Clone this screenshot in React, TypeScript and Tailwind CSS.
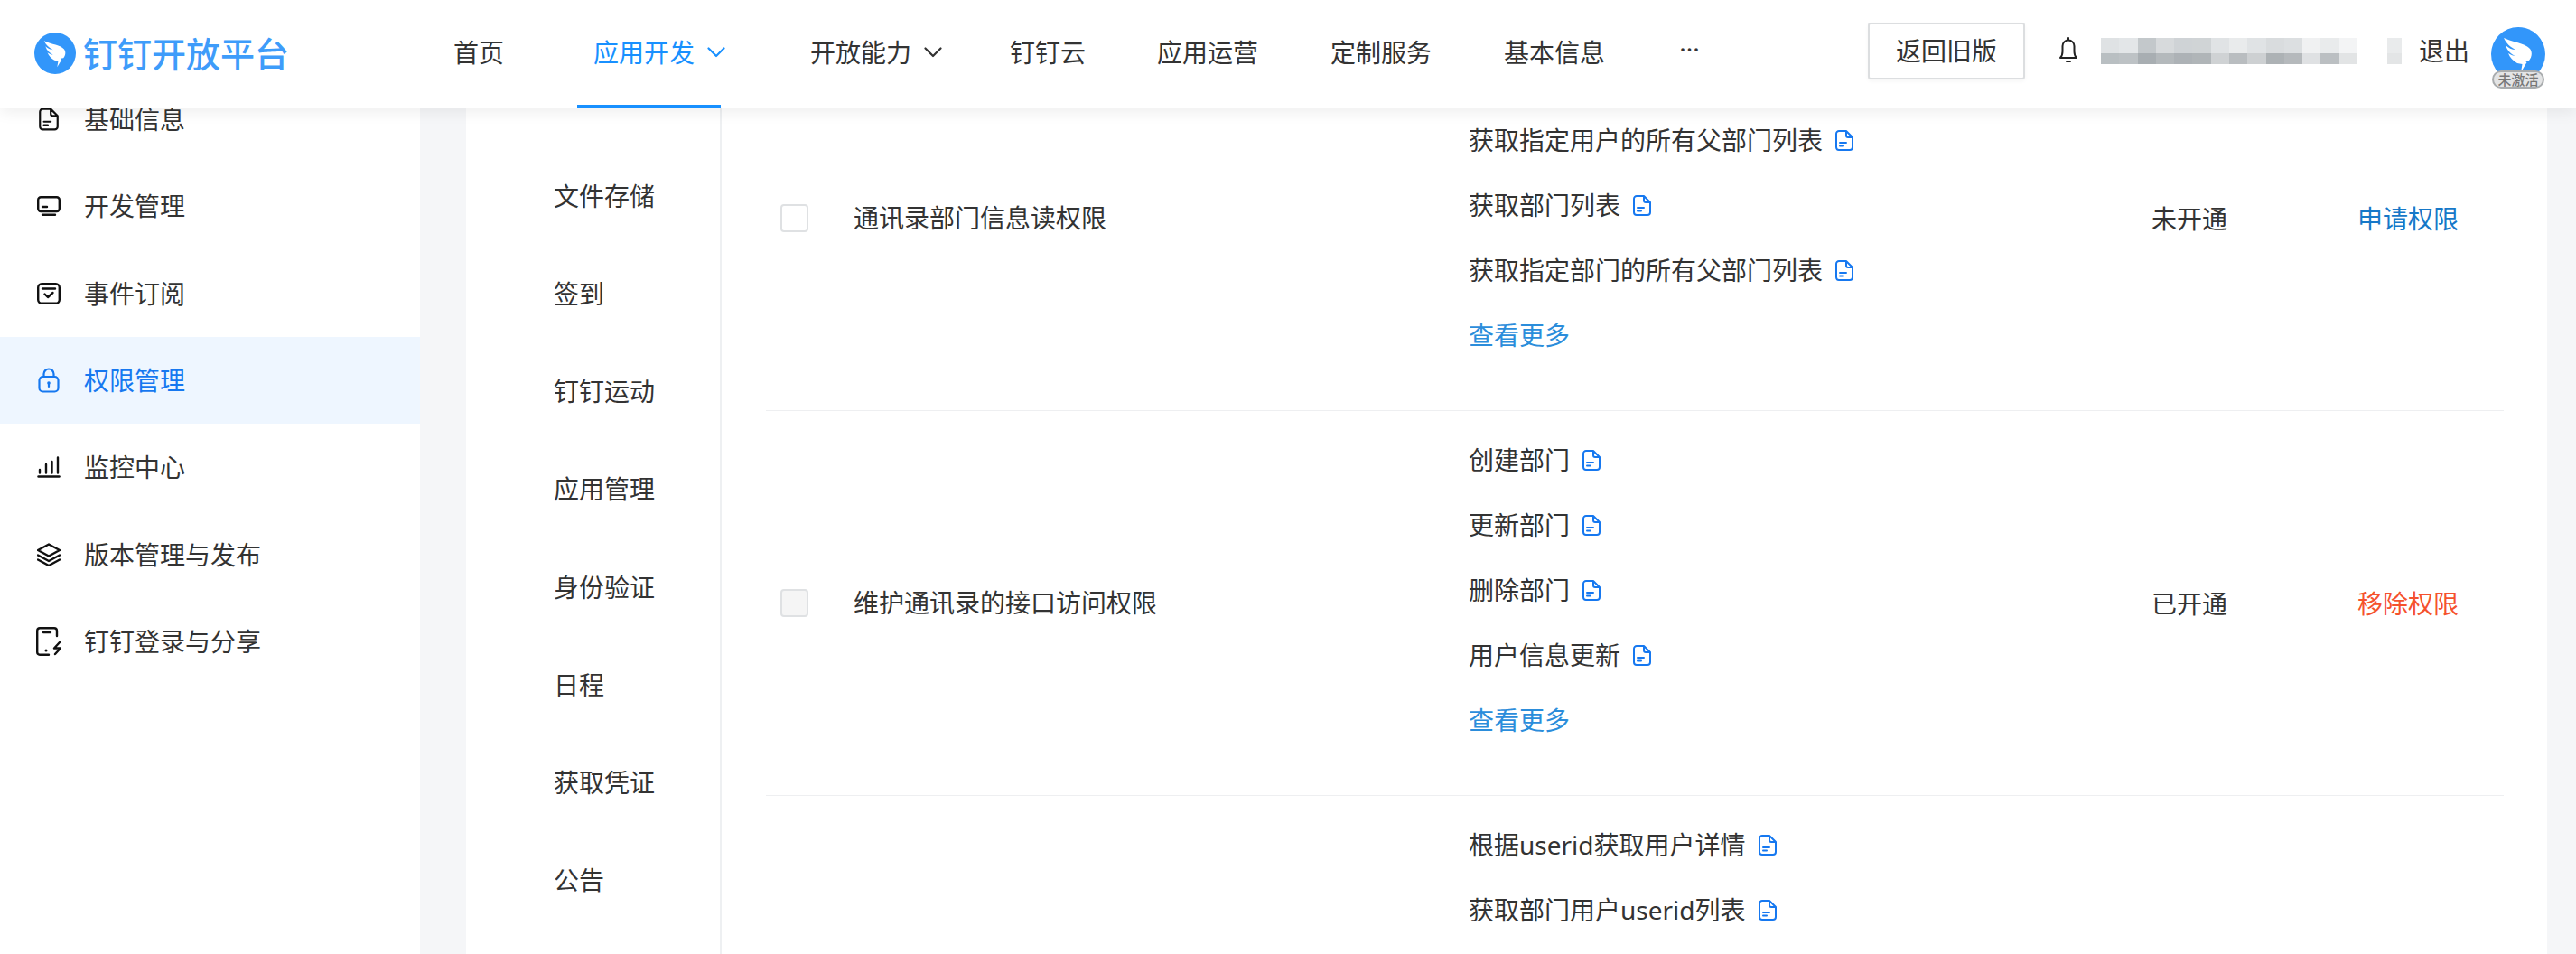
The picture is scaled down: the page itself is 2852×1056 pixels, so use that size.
import type { ReactNode } from "react";

const FONT = "font-['Noto_Sans','Noto_Sans_CJK_SC',sans-serif]";

function LogoMark({ className }: { className: string }) {
  return (
    <svg viewBox="0 0 60 60" className={className}>
      <circle cx="30" cy="30" r="30" fill="#3296fa" />
      <path
        fill="#fff"
        d="M14 12C25 17 38 18 43 24C46 28 45 33 42 37L37.5 37.5L39.5 39L33 50L34.5 41L29 40C24 37 21 34 19 29C22 31 25 32 27 32C22 30 18 26 16 20C19 23 23 25 27 25C21 22 17 18 14 12Z"
      />
    </svg>
  );
}

function Chevron({ className }: { className: string }) {
  return (
    <svg viewBox="0 0 20 12" fill="none" stroke="currentColor" strokeWidth="2.2" strokeLinecap="round" strokeLinejoin="round" className={className}>
      <path d="M1.5 1.5L10 10L18.5 1.5" />
    </svg>
  );
}

function DocIcon({ className }: { className: string }) {
  return (
    <svg viewBox="0 0 20 24" fill="none" stroke="currentColor" strokeWidth="2" strokeLinejoin="round" strokeLinecap="round" className={className}>
      <path d="M12 1.5H4A3 3 0 0 0 1 4.5V19.5A3 3 0 0 0 4 22.5H16A3 3 0 0 0 19 19.5V8.5H14A2 2 0 0 1 12 6.5V1.5L19 8.5" />
      <path d="M5 14.5H12M5 18H9" />
    </svg>
  );
}

function MonitorIcon() {
  return (
    <svg viewBox="0 0 26 22" fill="none" stroke="currentColor" strokeWidth="2.4" strokeLinecap="round" strokeLinejoin="round" className="w-[26px] h-[22px]">
      <rect x="1.2" y="1.2" width="23.6" height="15.8" rx="3" />
      <path d="M6 20.8H20M6 12H11" />
    </svg>
  );
}

function EventIcon() {
  return (
    <svg viewBox="0 0 26 24" fill="none" stroke="currentColor" strokeWidth="2.4" strokeLinecap="round" strokeLinejoin="round" className="w-[26px] h-[24px]">
      <rect x="1.2" y="1.2" width="23.6" height="21.6" rx="4" />
      <path d="M6 6.5H20M8.5 12.5L12 16L17.5 11" />
    </svg>
  );
}

function LockIcon() {
  return (
    <svg viewBox="0 0 24 28" fill="none" stroke="currentColor" strokeWidth="2.2" strokeLinecap="round" className="w-[24px] h-[28px]">
      <rect x="1.5" y="10" width="21" height="16.5" rx="4" />
      <path d="M6.5 10V7A5.5 5.5 0 0 1 17.5 7V10" />
      <path d="M12 17V21" />
      <circle cx="12" cy="17" r="1.8" fill="currentColor" stroke="none" />
    </svg>
  );
}

function BarsIcon() {
  return (
    <svg viewBox="0 0 26 24" fill="none" stroke="currentColor" strokeLinecap="round" className="w-[26px] h-[24px]">
      <path strokeWidth="2.5" d="M1.5 22.5H24.5" />
      <path strokeWidth="2.4" d="M3 18.5V15M10 18.5V9M16.5 18.5V6M23 18.5V1.5" />
    </svg>
  );
}

function LayersIcon() {
  return (
    <svg viewBox="0 0 26 26" fill="none" stroke="currentColor" strokeWidth="2.4" strokeLinejoin="round" strokeLinecap="round" className="w-[26px] h-[26px]">
      <path d="M13 1.5L25 8L13 14.5L1 8Z" />
      <path d="M1 13.5L13 20L25 13.5" />
      <path d="M1 18.5L13 25L25 18.5" />
    </svg>
  );
}

function PhoneBoltIcon() {
  return (
    <svg viewBox="0 0 28 32" fill="none" stroke="currentColor" strokeWidth="2.4" strokeLinecap="round" strokeLinejoin="round" className="w-[28px] h-[32px]">
      <path d="M23 10V4A3 3 0 0 0 20 1.2H4A3 3 0 0 0 1.2 4V28A3 3 0 0 0 4 30.8H14" />
      <path d="M8 6H16" />
      <circle cx="11" cy="26" r="1.5" fill="currentColor" stroke="none" />
      <path d="M26 17L20 23.5H27L21 30" />
    </svg>
  );
}

function NavText({ children, className = "text-[#333]" }: { children: ReactNode; className?: string }) {
  return <span className={`text-[28px] leading-[40px] whitespace-nowrap ${className}`}>{children}</span>;
}

function Header() {
  return (
    <header className="relative z-10 h-[120px] bg-white flex items-center shadow-[0_4px_16px_rgba(0,0,0,0.07)] shrink-0">
      <LogoMark className="ml-[38px] w-[46px] h-[46px] -mt-[3px] shrink-0" />
      <span className="ml-[8px] text-[38px] leading-[46px] font-medium text-[#3e9cfa] -mt-[3px] whitespace-nowrap">钉钉开放平台</span>
      <nav className="flex items-center ml-[182px] -mt-[4px]">
        <NavText>首页</NavText>
        <div className="relative ml-[99px] flex items-center">
          <NavText className="text-[#1890ff]">应用开发</NavText>
          <Chevron className="ml-[14px] w-[20px] h-[12px] text-[#1890ff]" />
          <div className="absolute left-[-18px] top-[78px] w-[159px] h-[4px] bg-[#1890ff]" />
        </div>
        <NavText className="text-[#333] ml-[94px]">开放能力</NavText>
        <Chevron className="ml-[14px] w-[20px] h-[12px] text-[#333]" />
        <span className="ml-[75px]"><NavText>钉钉云</NavText></span>
        <span className="ml-[79px]"><NavText>应用运营</NavText></span>
        <span className="ml-[80px]"><NavText>定制服务</NavText></span>
        <span className="ml-[80px]"><NavText>基本信息</NavText></span>
        <span className="ml-[82px] text-[28px] leading-[24px] text-[#333] -mt-[8px]">···</span>
      </nav>
      <div className="ml-auto flex items-center -mt-[8px]">
        <button className="w-[174px] h-[63px] border-2 border-[#dcdee0] rounded-[3px] text-[28px] text-[#333] bg-white shadow-[0_2px_4px_rgba(0,0,0,0.04)]">
          返回旧版
        </button>
        <svg viewBox="0 0 24 30" fill="none" stroke="#222" strokeWidth="2" strokeLinejoin="round" className="ml-[36px] w-[24px] h-[30px]">
          <path d="M3 23C5 21 5.5 19 5.5 16V10A6.5 6.5 0 0 1 18.5 10V16C18.5 19 19 21 21 23Z" />
          <path d="M10 27H14" strokeLinecap="round" />
          <path d="M12 1V3" strokeLinecap="round" />
        </svg>
        <BlurredName />
        <NavText className="text-[#333] ml-[19px]">退出</NavText>
        <div className="relative ml-[24px] mr-[34px] w-[60px] h-[60px] mt-[8px]">
          <LogoMark className="w-[60px] h-[60px]" />
          <div className="absolute left-[1px] top-[48px] w-[58px] h-[20px] rounded-full border-2 border-[#a9acae] bg-[#e3e4e5] flex items-center justify-center text-[15px] leading-none font-medium text-[#777] whitespace-nowrap">
            未激活
          </div>
        </div>
      </div>
    </header>
  );
}

const mosaicTop = ["bg-[#dfe2e4]", "bg-[#e3e6e8]", "bg-[#c3c8cb]", "bg-[#d7dadc]", "bg-[#cfd3d6]", "bg-[#d0d4d6]", "bg-[#e0e3e5]", "bg-[#e9ebec]", "bg-[#e0e3e5]", "bg-[#d9dcde]", "bg-[#dcdfe1]", "bg-[#f0f1f2]", "bg-[#e9ebec]", "bg-[#f3f4f5]"];
const mosaicBottom = ["bg-[#b9bfc2]", "bg-[#bdc2c5]", "bg-[#a8aeb2]", "bg-[#b4b9bc]", "bg-[#adb2b6]", "bg-[#b0b5b8]", "bg-[#cfd2d4]", "bg-[#b9bdc0]", "bg-[#cdd0d2]", "bg-[#adb2b5]", "bg-[#b5b9bc]", "bg-[#dfe1e3]", "bg-[#bbbfc2]", "bg-[#e2e4e5]"];

function BlurredName() {
  return (
    <div className="ml-[24px] flex items-center">
      <div className="w-[284px] grid grid-cols-[repeat(14,1fr)] grid-rows-[17px_12px]">
        {mosaicTop.map((c, i) => (
          <div key={i} className={c} />
        ))}
        {mosaicBottom.map((c, i) => (
          <div key={i} className={c} />
        ))}
      </div>
      <div className="ml-[33px] w-[16px] h-[29px] flex flex-col">
        <div className="h-[17px] bg-[#e9ebec]" />
        <div className="h-[12px] bg-[#e3e5e6]" />
      </div>
    </div>
  );
}

const sideItems: { label: string; icon: ReactNode; active?: boolean }[] = [
  { label: "基础信息", icon: <DocIcon className="w-[22px] h-[26px]" /> },
  { label: "开发管理", icon: <MonitorIcon /> },
  { label: "事件订阅", icon: <EventIcon /> },
  { label: "权限管理", icon: <LockIcon />, active: true },
  { label: "监控中心", icon: <BarsIcon /> },
  { label: "版本管理与发布", icon: <LayersIcon /> },
  { label: "钉钉登录与分享", icon: <PhoneBoltIcon /> },
];

function Sidebar() {
  return (
    <aside className="w-[465px] shrink-0 bg-white -mt-[36px]">
      {sideItems.map((item) => (
        <div
          key={item.label}
          className={`h-[96.3px] flex items-center text-[28px] ${item.active ? "bg-[#eef6ff] text-[#1678f0]" : "text-[#333]"}`}
        >
          <span className={`ml-[40px] w-[28px] flex justify-center ${item.active ? "text-[#1678f0]" : "text-[#111]"}`}>{item.icon}</span>
          <span className="ml-[25px]">{item.label}</span>
        </div>
      ))}
    </aside>
  );
}

const subItems = ["通讯录管理", "文件存储", "签到", "钉钉运动", "应用管理", "身份验证", "日程", "获取凭证", "公告"];

function SubNav() {
  return (
    <div className="w-[283px] shrink-0 border-r-2 border-[#eef0f2] -mt-[65px]">
      {subItems.map((s, i) => (
        <div key={s} className={`h-[108.1px] flex items-center pl-[97px] text-[28px] text-[#333] whitespace-nowrap ${i === 0 ? "pb-[8px]" : ""}`}>
          {s}
        </div>
      ))}
    </div>
  );
}

type Row = { title: string; apis: string[]; status: string; action: string; danger?: boolean; disabled?: boolean };

const rows: Row[] = [
  {
    title: "通讯录部门信息读权限",
    apis: ["获取部门详情", "获取指定用户的所有父部门列表", "获取部门列表", "获取指定部门的所有父部门列表"],
    status: "未开通",
    action: "申请权限",
  },
  {
    title: "维护通讯录的接口访问权限",
    apis: ["创建部门", "更新部门", "删除部门", "用户信息更新"],
    status: "已开通",
    action: "移除权限",
    danger: true,
    disabled: true,
  },
  {
    title: "通讯录用户信息读权限",
    apis: ["根据userid获取用户详情", "获取部门用户userid列表", "获取部门用户详情", "获取部门用户列表"],
    status: "未开通",
    action: "申请权限",
  },
];

function PermissionRow({ row }: { row: Row }) {
  return (
    <div className="grid grid-cols-[778px_756px_228px_1fr] items-center border-b border-[#eeeff1] text-[28px] text-[#333] h-[426px] shrink-0">
      <div className="flex items-center pl-[16px]">
        <div className={`w-[31px] h-[31px] rounded-[4px] border-2 border-[#dfe1e3] ${row.disabled ? "bg-[#f5f5f5]" : "bg-white"}`} />
        <span className="ml-[50px] -mt-[2px]">{row.title}</span>
      </div>
      <div className="flex flex-col pt-[18px] pb-[47px]">
        {row.apis.map((a) => (
          <div key={a} className="h-[72px] flex items-center whitespace-nowrap">
            <span>{a}</span>
            <DocIcon className="ml-[14px] w-[20px] h-[25px] text-[#1678f0]" />
          </div>
        ))}
        <div className="h-[72px] flex items-center text-[#2b8ddb]">查看更多</div>
      </div>
      <div>{row.status}</div>
      <div className={row.danger ? "text-[#f5522d]" : "text-[#1678c8]"}>{row.action}</div>
    </div>
  );
}

export default function App() {
  return (
    <div className={`h-[1056px] w-[2852px] overflow-hidden flex flex-col bg-[#f5f6f8] ${FONT}`}>
      <Header />
      <main className="flex flex-1 min-h-0 overflow-hidden">
        <Sidebar />
        <div className="ml-[51px] w-[2304px] bg-white flex min-h-0">
          <SubNav />
          <div className="ml-[49px] w-[1924px] -mt-[91px] flex flex-col">
            {rows.map((r) => (
              <PermissionRow key={r.title} row={r} />
            ))}
          </div>
        </div>
      </main>
    </div>
  );
}
